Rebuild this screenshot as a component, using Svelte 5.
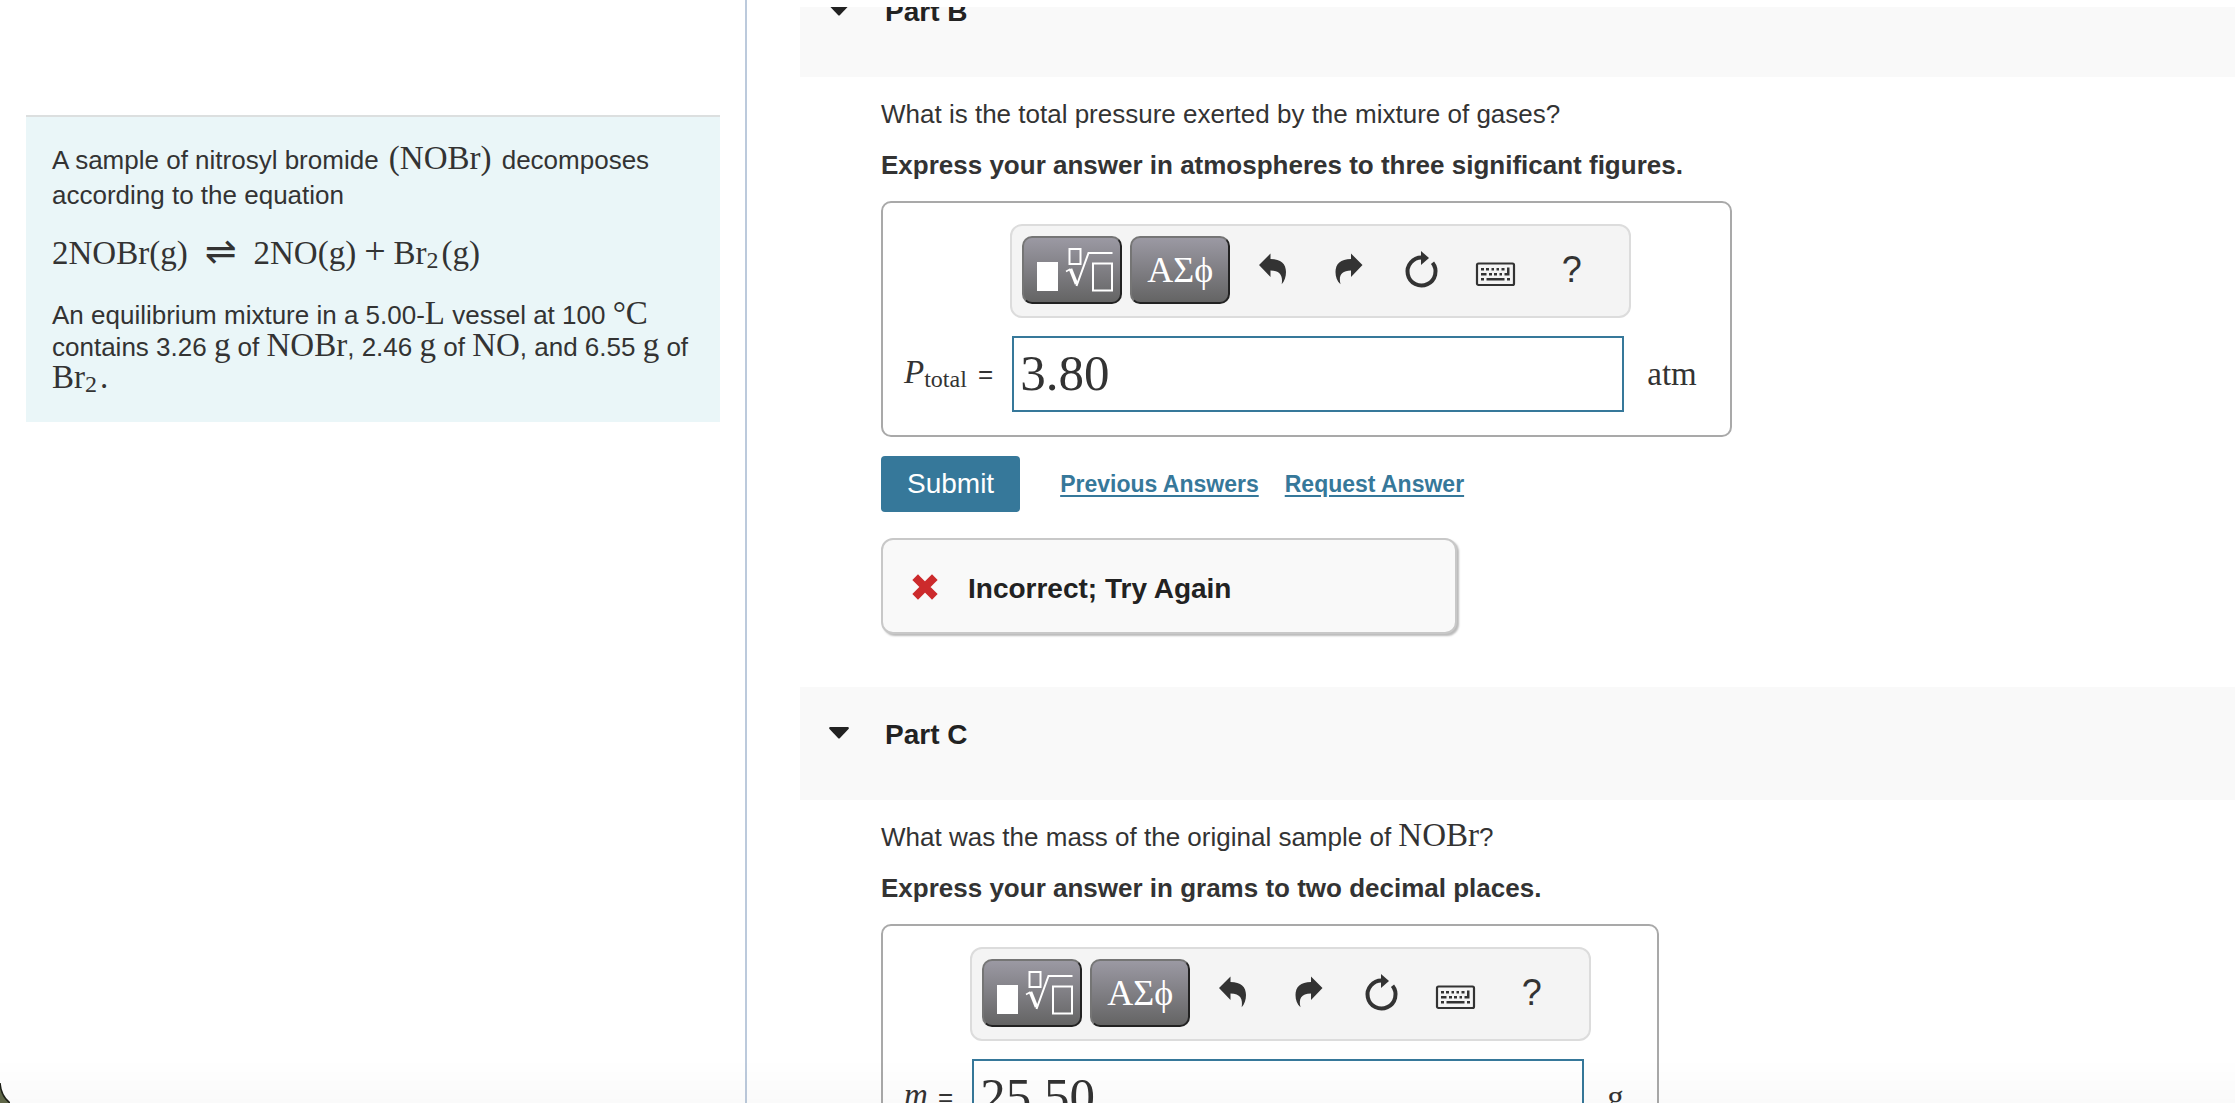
<script>
  let pressure = '3.80';
  let mass = '25.50';
  let openB = true;
  let openC = true;
</script>

{#snippet toolbar()}
  <div class="toolbar" role="toolbar" aria-label="Equation tools">
    <button type="button" class="palette" aria-label="Templates">
      <svg width="96" height="64" viewBox="2 2 96 64" fill="none" stroke="#fff">
        <rect x="15" y="26" width="21" height="29" fill="#fff" stroke="none" />
        <rect x="47.5" y="13" width="11" height="15" stroke-width="2" />
        <rect x="71" y="27.5" width="19" height="27" stroke-width="2" />
        <path d="M44 35.5l4.5-2.5" stroke-width="1.5" />
        <path d="M48.5 33l6 15" stroke-width="3.5" />
        <path d="M54.5 50l12-33h24" stroke-width="2" />
      </svg>
    </button>
    <button type="button" class="palette" aria-label="Symbols">ΑΣϕ</button>
    <div class="icons">
      <button type="button" class="icon" aria-label="Undo">
        <svg width="44" height="44" viewBox="0 0 44 44">
          <path d="M9 17L20.5 5.5V11C31 11 36 16 36 24C36 29 34.5 33 31.7 36.3C33 28 30.5 22.5 20.5 22.5V29Z" />
        </svg>
      </button>
      <button type="button" class="icon" aria-label="Redo">
        <svg width="44" height="44" viewBox="0 0 44 44">
          <path d="M37.5 17L26 5.5V11C15.5 11 10.5 16 10.5 24C10.5 29 12 33 15.5 36.3C13.5 28 16 22.5 26 22.5V29Z" />
        </svg>
      </button>
      <button type="button" class="icon" aria-label="Reset">
        <svg width="44" height="44" viewBox="0 0 44 44">
          <path d="M22 9.5A14 14 0 1 0 32.5 14.8" fill="none" stroke="#333" stroke-width="4" />
          <path d="M21 3L29 10L21 17Z" />
        </svg>
      </button>
      <button type="button" class="icon" aria-label="Keyboard shortcuts">
        <svg width="44" height="44" viewBox="0 0 44 44">
          <rect x="2" y="15.5" width="37" height="21.5" rx="1.5" fill="none" stroke="#333" stroke-width="2.2" />
          <path d="M6 20h3v2.5h-3zM11 20h3v2.5h-3zM16.5 20h2.5v2.5h-2.5zM21.5 20h2.5v2.5h-2.5zM26.5 20h3v2.5h-3zM32 19.5h2.5v8h-5v-2.5h2.5z" />
          <path d="M6 25h5.5v2.5h-5.5zM14 25h3v2.5h-3zM19 25h3v2.5h-3zM24.5 25h2.5v2.5h-2.5z" />
          <path d="M6 30h3v2.5h-3zM11.5 30h18v2.5h-18zM32 30h3v2.5h-3z" />
        </svg>
      </button>
      <button type="button" class="icon help" aria-label="Help">?</button>
    </div>
  </div>
{/snippet}

{#snippet caret()}
  <svg width="20" height="12" viewBox="0 0 20 12">
    <path d="M1 0H19Q20.5 0.5 19.5 2L11 11Q10 12 9 11L0.5 2Q-0.5 0.5 1 0Z" fill="#222" />
  </svg>
{/snippet}

<div class="page">
  <aside class="side">
    <div class="problem">
      <p class="intro">
        A sample of nitrosyl bromide <span class="math group">(NOBr)</span> decomposes according to the equation
      </p>
      <p class="equation">
        <span class="math">2NOBr(g)</span><span class="arrow">⇌</span><span class="math">2NO(g)</span><span class="math plus">+</span><span class="math">Br<span class="sub">2</span>(g)</span>
      </p>
      <p class="details">
        An equilibrium mixture in a 5.00-<span class="math">L</span> vessel at 100 <span class="math">°C</span>
        contains 3.26 <span class="math">g</span> of <span class="math">NOBr</span>, 2.46
        <span class="math">g</span> of <span class="math">NO</span>, and 6.55
        <span class="math">g</span> of <span class="math">Br<span class="sub">2</span>.</span>
      </p>
    </div>
  </aside>

  <main class="parts">
    <div class="scrolled">
      <section>
        <header class="part-header">
          <button type="button" aria-expanded={openB} on:click={() => (openB = !openB)}>
            {@render caret()}
            Part B
          </button>
        </header>
        {#if openB}
          <div class="part-body">
            <p>What is the total pressure exerted by the mixture of gases?</p>
            <p class="hint">Express your answer in atmospheres to three significant figures.</p>
            <div class="answer">
              {@render toolbar()}
              <label for="pressure"><span class="math"><i>P</i><span class="sub">total</span></span> =</label>
              <input id="pressure" type="text" autocomplete="off" bind:value={pressure} />
              <span class="math unit">atm</span>
            </div>
            <div class="actions">
              <button type="button" class="submit">Submit</button>
              <a href="#previous">Previous Answers</a>
              <a href="#request">Request Answer</a>
            </div>
            <div class="feedback" role="status">
              <svg width="28" height="28" viewBox="0 0 28 28">
                <path d="M7 7L21 21M21 7L7 21" stroke="#cc2a2c" stroke-width="8" stroke-linecap="square" />
              </svg>
              Incorrect; Try Again
            </div>
          </div>
        {/if}
      </section>

      <section>
        <header class="part-header">
          <button type="button" aria-expanded={openC} on:click={() => (openC = !openC)}>
            {@render caret()}
            Part C
          </button>
        </header>
        {#if openC}
          <div class="part-body">
            <p>What was the mass of the original sample of <span class="math">NOBr</span>?</p>
            <p class="hint">Express your answer in grams to two decimal places.</p>
            <div class="answer">
              {@render toolbar()}
              <label for="mass"><span class="math"><i>m</i></span> =</label>
              <input id="mass" type="text" autocomplete="off" bind:value={mass} />
              <span class="math unit">g</span>
            </div>
          </div>
        {/if}
      </section>
    </div>
  </main>

  <div class="fade"></div>
  <svg class="corner" width="10" height="20" viewBox="0 0 10 20">
    <path d="M0 0Q1 13 10 20H0Z" fill="#5f6748" />
    <path d="M0 0Q1 13 10 20" fill="none" stroke="#1c1e16" stroke-width="1.5" />
  </svg>
</div>

<style>
  :global(body) {
    margin: 0;
    background: #fff;
  }

  .page {
    display: grid;
    grid-template-columns: 1fr 2fr;
    height: 100vh;
    overflow: hidden;
    font-family: "Liberation Sans", Arial, sans-serif;
    font-size: 26px;
    line-height: 32px;
    color: #333;
  }

  p { margin: 0; }

  button {
    font-family: inherit;
    cursor: pointer;
  }

  .math {
    font-family: "Liberation Serif", "Times New Roman", serif;
    font-size: 33px;
    line-height: 0;
    white-space: nowrap;
  }

  .group { margin: 0 3px; }

  .sub {
    margin-right: 3px;
    font-size: 24px;
    position: relative;
    top: 4px;
  }

  /* problem statement */
  .side { padding: 115px 25px 0 26px; }

  .problem {
    padding: 26px 20px 27px 26px;
    border-top: 2px solid #dcdfdf;
    background: #eaf6f8;
  }

  .intro { line-height: 35px; }

  .equation {
    margin: 24px 0 26px;
    line-height: 36px;
    white-space: nowrap;
  }

  .arrow {
    margin: 0 17px;
    font-family: "DejaVu Sans", sans-serif;
    font-size: 38px;
    line-height: 0;
  }

  .plus {
    margin: 0 8px;
    font-size: 38px;
  }

  /* parts */
  .parts {
    min-width: 0;
    border-left: 2px solid #bccadc;
    padding-top: 7px;
  }

  .scrolled {
    height: 100%;
    padding-left: 53px;
    overflow: hidden;
  }

  section:first-child { margin-top: -43px; }

  .part-header {
    height: 113px;
    background: #f9f9f9;
  }

  .part-header button {
    display: flex;
    align-items: center;
    gap: 36px;
    padding: 32px 29px;
    border: none;
    background: none;
    color: #222;
    font-size: 28px;
    font-weight: bold;
    line-height: 32px;
  }

  .part-header svg { margin-bottom: 4px; }

  .part-body { padding: 21px 20px 53px 81px; }

  .hint {
    margin: 19px 0 20px;
    font-weight: bold;
  }

  .answer {
    display: grid;
    grid-template-columns: auto 614px auto;
    row-gap: 18px;
    align-items: center;
    width: fit-content;
    padding: 21px 33px 23px 21px;
    border: 2px solid #a9a9a9;
    border-radius: 10px;
  }

  .toolbar {
    grid-column: 2 / span 2;
    display: flex;
    align-items: center;
    box-sizing: border-box;
    width: 621px;
    height: 94px;
    padding: 0 0 2px 10px;
    border: 2px solid #dcdcdc;
    border-radius: 12px;
    background: #f4f4f4;
  }

  .palette {
    width: 100px;
    height: 68px;
    margin-right: 8px;
    padding: 0;
    border: 2px solid;
    border-color: #757575 #222 #222 #757575;
    border-radius: 10px;
    background: linear-gradient(#9b99a3, #646464);
    color: #fff;
    font-family: "Liberation Serif", serif;
    font-size: 36px;
    line-height: 60px;
  }

  .palette svg { display: block; }

  .icons {
    display: flex;
    margin-left: -4px;
  }

  .icon {
    display: flex;
    align-items: center;
    justify-content: center;
    width: 75px;
    height: 68px;
    padding: 0;
    border: none;
    background: none;
    color: #333;
    fill: #333;
  }

  .help { font-size: 36px; }

  label {
    grid-column: 1;
    padding-right: 17px;
    white-space: nowrap;
  }

  label .math { margin-right: 3px; }

  label .sub { margin-right: 1px; }

  input {
    box-sizing: border-box;
    width: 612px;
    height: 76px;
    margin: 0 0 0 2px;
    padding: 0 6px 2px;
    border: 2px solid #36789a;
    border-radius: 0;
    outline: none;
    background: #fff;
    color: #333;
    font-family: "Liberation Serif", "Times New Roman", serif;
    font-size: 51px;
  }

  .unit { padding-left: 23px; }

  .actions {
    display: flex;
    align-items: center;
    margin: 19px 0 26px;
  }

  .submit {
    height: 56px;
    margin-right: 40px;
    padding: 0 26px;
    border: none;
    border-radius: 4px;
    background: #36789a;
    color: #fff;
    font-size: 28px;
  }

  a {
    margin-right: 26px;
    color: #36789a;
    font-size: 23px;
    font-weight: bold;
    text-underline-offset: 3px;
    text-decoration-thickness: 2px;
  }

  .feedback {
    display: flex;
    align-items: center;
    gap: 29px;
    box-sizing: border-box;
    width: 576px;
    height: 96px;
    padding: 6px 28px 0;
    border: 2px solid #c8c8c8;
    border-radius: 12px;
    background: #f9f9f9;
    box-shadow: 2px 2px 2px #bbb;
    color: #222;
    font-size: 28px;
    font-weight: bold;
  }

  .feedback svg { margin-bottom: 4px; }

  /* window edge */
  .fade {
    position: fixed;
    inset: auto 0 0;
    height: 44px;
    background: linear-gradient(transparent, rgba(0, 0, 0, 0.02));
    pointer-events: none;
  }

  .corner {
    position: fixed;
    left: 0;
    bottom: 0;
  }
</style>
